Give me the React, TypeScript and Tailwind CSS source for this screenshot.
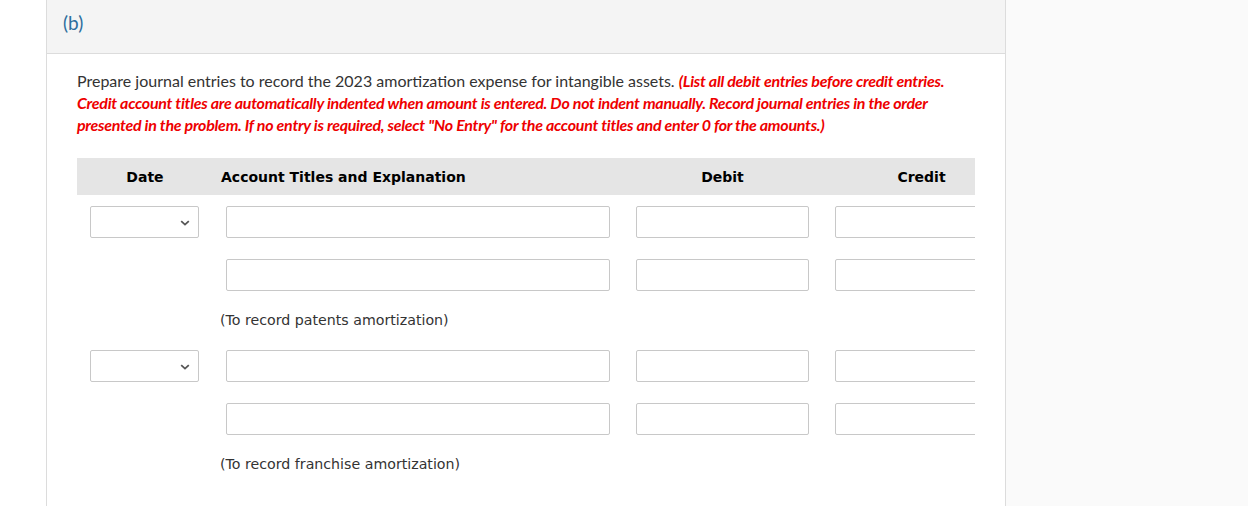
import React from "react";

const Chevron = () => (
  <svg width="10" height="6" viewBox="0 0 10 6" className="absolute right-[8px] top-[13px]">
    <path d="M1.2 1.2 L5 4.6 L8.8 1.2" fill="none" stroke="#555" strokeWidth="1.8" />
  </svg>
);

const DateSel = () => (
  <div className="relative ml-[13px] h-[32px] w-[109px] rounded-[2px] border border-[#c8c8c8] bg-white">
    <Chevron />
  </div>
);

const EntryRow = ({ date }: { date: boolean }) => (
  <div className="flex h-[32px]">
    <div className="w-[136px] shrink-0">{date ? <DateSel /> : null}</div>
    <div className="ml-[13px] h-[32px] w-[384px] shrink-0 rounded-[2px] border border-[#c8c8c8] bg-white" />
    <div className="ml-[26px] h-[32px] w-[173px] shrink-0 rounded-[2px] border border-[#c8c8c8] bg-white" />
    <div className="ml-[26px] h-[32px] w-[173px] shrink-0 rounded-[2px] border border-[#c8c8c8] bg-white" />
  </div>
);

const Explain = ({ text }: { text: string }) => (
  <div className="flex h-[59px] items-center pl-[143px] text-[14.2px] text-[#333]" style={{ fontFamily: '"DejaVu Sans", Verdana, sans-serif' }}>
    {text}
  </div>
);

export default function App() {
  return (
    <div className="flex min-h-[506px] w-[1248px] bg-white">
      <div className="ml-[46px] min-h-[506px] w-[960px] shrink-0 border-x border-[#dcdcdc] bg-white">
        <div className="h-[54px] border-b border-[#dcdcdc] bg-[#f4f4f4] pl-[16px] pt-[9px] text-[19px] text-[#2d6e9e]" style={{ fontFamily: "Lato, sans-serif" }}>
          (b)
        </div>
        <div className="px-[30px]">
          <p className="mt-[16px] w-[898px] text-[16px] leading-[22px] text-[#333]" style={{ fontFamily: "Lato, sans-serif" }}>
            Prepare journal entries to record the 2023 amortization expense for intangible assets.{" "}
            <span className="font-bold italic tracking-[-0.27px] text-[#ee0000]">
              (List all debit entries before credit entries.
              <br />
              Credit account titles are automatically indented when amount is entered. Do not indent manually. Record journal entries in the order
              <br />
              presented in the problem. If no entry is required, select "No Entry" for the account titles and enter 0 for the amounts.)
            </span>
          </p>
          <div className="mt-[22px] w-[898px] overflow-hidden">
            <div className="flex h-[37px] items-center bg-[#e5e5e5] pt-[1px] text-[14px] font-bold text-black" style={{ fontFamily: '"DejaVu Sans", Verdana, sans-serif' }}>
              <div className="w-[136px] shrink-0 text-center">Date</div>
              <div className="ml-[8px] w-[389px] shrink-0">Account Titles and Explanation</div>
              <div className="ml-[26px] w-[173px] shrink-0 text-center">Debit</div>
              <div className="ml-[26px] w-[173px] shrink-0 text-center">Credit</div>
            </div>
            <div className="pt-[11px]">
              <EntryRow date={true} />
              <div className="h-[21px]" />
              <EntryRow date={false} />
              <Explain text="(To record patents amortization)" />
              <EntryRow date={true} />
              <div className="h-[21px]" />
              <EntryRow date={false} />
              <Explain text="(To record franchise amortization)" />
            </div>
          </div>
        </div>
      </div>
      <div className="min-h-[506px] flex-1 bg-[#fafafa]" />
    </div>
  );
}
